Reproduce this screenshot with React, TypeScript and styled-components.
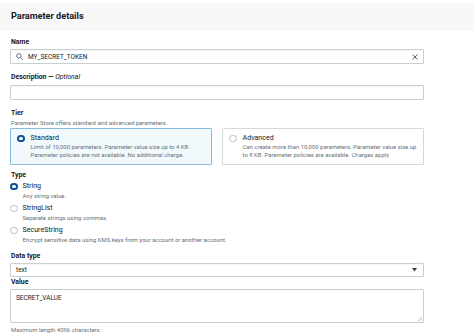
import React from "react";
import styled, { createGlobalStyle } from "styled-components";

const Global = createGlobalStyle`
  html, body { margin: 0; padding: 0; background: #ffffff; }
  body {
    font-family: Roboto, "Liberation Sans", Arial, sans-serif;
    color: #16191f;
    width: 474px;
    height: 335px;
    overflow: hidden;
  }
  * { box-sizing: border-box; }
`;

const Page = styled.div`
  padding-top: 3px;
`;

const Header = styled.div`
  height: 27px;
  background: #f8f8f8;
  border-bottom: 1px solid #efefef;
  display: flex;
  align-items: center;
  padding-left: 11px;
`;

const Title = styled.h2`
  margin: 0;
  font-size: 9.1px;
  font-weight: 700;
  color: #16191f;
`;

const Body = styled.div`
  padding: 7px 50px 0 10px;
  display: flex;
  flex-direction: column;
`;

const Field = styled.div<{ $top?: number }>`
  display: flex;
  flex-direction: column;
  margin-top: ${(p) => p.$top ?? 0}px;
`;

const Label = styled.div<{ $gap?: number }>`
  font-size: 6.9px;
  line-height: 10px;
  font-weight: 700;
  padding-left: 1px;
  margin-bottom: ${(p) => p.$gap ?? 0}px;
  color: #16191f;
  em {
    font-weight: 400;
    font-style: italic;
  }
`;

const Hint = styled.div<{ $lh?: number; $gap?: number; $top?: number }>`
  font-size: 5.95px;
  line-height: ${(p) => p.$lh ?? 9}px;
  color: #687078;
  padding-left: 1px;
  margin-bottom: ${(p) => p.$gap ?? 0}px;
  margin-top: ${(p) => p.$top ?? 0}px;
`;

const InputBox = styled.div`
  position: relative;
  height: 15px;
  border: 1px solid #c9ced0;
  border-radius: 1px;
  background: #fff;
  display: flex;
  align-items: center;
  padding: 0 5px;
  gap: 5px;
  box-shadow: inset 0 1px 0 rgba(0, 0, 0, 0.03);
`;

const SelectBox = styled(InputBox)`
  height: 14px;
`;

const InputText = styled.input`
  flex: 1;
  border: none;
  outline: none;
  background: transparent;
  padding: 0;
  font-family: inherit;
  font-size: 6.5px;
  color: #16191f;
  min-width: 0;
`;

const SelectText = styled.span`
  flex: 1;
  font-size: 6.5px;
  color: #16191f;
`;

const IconSlot = styled.span`
  display: flex;
  align-items: center;
  justify-content: center;
  width: 7px;
  height: 7px;
  flex: none;
`;

const TextAreaWrap = styled.div`
  position: relative;
  height: 34px;
  border: 1px solid #c9ced0;
  border-radius: 1px;
  background: #fff;
`;

const TextArea = styled.textarea`
  display: block;
  width: 100%;
  height: 100%;
  border: none;
  outline: none;
  resize: none;
  background: transparent;
  padding: 4px 5px;
  font-family: inherit;
  font-size: 6.5px;
  line-height: 8px;
  color: #16191f;
`;

const Grip = styled.svg`
  position: absolute;
  right: 1px;
  bottom: 1px;
`;

const Tiles = styled.div`
  display: grid;
  grid-template-columns: 1fr 1fr;
  gap: 10px;
`;

const Tile = styled.div<{ $selected?: boolean }>`
  height: 37px;
  border: 1px solid ${(p) => (p.$selected ? "#86bcdc" : "#d5d9da")};
  background: ${(p) => (p.$selected ? "#f1f9fd" : "#ffffff")};
  border-radius: 1px;
  padding: 4px 6px 4px 6px;
  display: flex;
  gap: 6px;
  align-items: flex-start;
`;

const RadioDot = styled.span<{ $checked?: boolean }>`
  flex: none;
  width: 7.5px;
  height: 7.5px;
  border-radius: 50%;
  margin-top: 1.5px;
  background: #fff;
  border: ${(p) => (p.$checked ? "2.3px solid #0b5394" : "1px solid #b6bfc1")};
`;

const OptionText = styled.div`
  display: flex;
  flex-direction: column;
`;

const OptionTitle = styled.div`
  font-size: 7.1px;
  line-height: 10px;
  color: #16191f;
`;

const TileDesc = styled.div`
  font-size: 5.95px;
  line-height: 8px;
  color: #687078;
  white-space: nowrap;
`;

const RadioList = styled.div`
  display: flex;
  flex-direction: column;
  gap: 2px;
  margin-top: 1px;
`;

const RadioRow = styled.div`
  display: flex;
  gap: 5px;
  align-items: flex-start;
`;

const RowDesc = styled.div`
  font-size: 5.95px;
  line-height: 10px;
  color: #687078;
`;

const SearchIcon = () => (
  <svg width="7" height="7" viewBox="0 0 16 16" fill="none" stroke="#545b64" strokeWidth="2">
    <circle cx="6.5" cy="6.5" r="5" />
    <path d="M10.2 10.2 L15 15" strokeLinecap="round" />
  </svg>
);

const ClearIcon = () => (
  <svg width="6" height="6" viewBox="0 0 16 16" fill="none" stroke="#3b4148" strokeWidth="2.2">
    <path d="M2 2 L14 14 M14 2 L2 14" strokeLinecap="round" />
  </svg>
);

const CaretIcon = () => (
  <svg width="5" height="4" viewBox="0 0 10 8">
    <path d="M0 0 H10 L5 7 Z" fill="#3b4148" />
  </svg>
);

const types = [
  { title: "String", desc: "Any string value.", checked: true },
  { title: "StringList", desc: "Separate strings using commas.", checked: false },
  {
    title: "SecureString",
    desc: "Encrypt sensitive data using KMS keys from your account or another account.",
    checked: false,
  },
];

export default function App() {
  return (
    <>
      <Global />
      <Page>
        <Header>
          <Title>Parameter details</Title>
        </Header>
        <Body>
          <Field>
            <Label $gap={2}>Name</Label>
            <InputBox>
              <IconSlot>
                <SearchIcon />
              </IconSlot>
              <InputText readOnly value="MY_SECRET_TOKEN" />
              <IconSlot>
                <ClearIcon />
              </IconSlot>
            </InputBox>
          </Field>

          <Field $top={8}>
            <Label $gap={3}>
              Description — <em>Optional</em>
            </Label>
            <InputBox />
          </Field>

          <Field $top={8}>
            <Label>Tier</Label>
            <Hint $gap={1}>Parameter Store offers standard and advanced parameters.</Hint>
            <Tiles>
              <Tile $selected>
                <RadioDot $checked />
                <OptionText>
                  <OptionTitle>Standard</OptionTitle>
                  <TileDesc>
                    Limit of 10,000 parameters. Parameter value size up to 4 KB.
                    <br />
                    Parameter policies are not available. No additional charge.
                  </TileDesc>
                </OptionText>
              </Tile>
              <Tile>
                <RadioDot />
                <OptionText>
                  <OptionTitle>Advanced</OptionTitle>
                  <TileDesc>
                    Can create more than 10,000 parameters. Parameter value size up
                    <br />
                    to 8 KB. Parameter policies are available. Charges apply
                  </TileDesc>
                </OptionText>
              </Tile>
            </Tiles>
          </Field>

          <Field $top={5}>
            <Label>Type</Label>
            <RadioList>
              {types.map((t) => (
                <RadioRow key={t.title}>
                  <RadioDot $checked={t.checked} />
                  <OptionText>
                    <OptionTitle>{t.title}</OptionTitle>
                    <RowDesc>{t.desc}</RowDesc>
                  </OptionText>
                </RadioRow>
              ))}
            </RadioList>
          </Field>

          <Field $top={6}>
            <Label $gap={2}>Data type</Label>
            <SelectBox>
              <SelectText>text</SelectText>
              <IconSlot>
                <CaretIcon />
              </IconSlot>
            </SelectBox>
          </Field>

          <Field>
            <Label $gap={2}>Value</Label>
            <TextAreaWrap>
              <TextArea readOnly value="SECRET_VALUE" />
              <Grip width="5" height="5" viewBox="0 0 5 5">
                <path d="M5 1 L1 5 M5 3 L3 5" stroke="#9aa3a6" strokeWidth="0.7" />
              </Grip>
            </TextAreaWrap>
            <Hint $top={1.5}>Maximum length 4096 characters.</Hint>
          </Field>
        </Body>
      </Page>
    </>
  );
}
